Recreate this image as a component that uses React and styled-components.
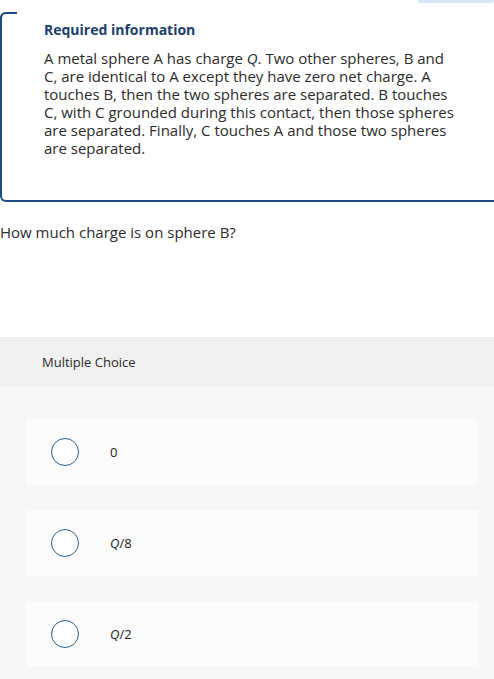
import React from 'react';
import styled, {createGlobalStyle} from 'styled-components';

const Global = createGlobalStyle`
  body {
    margin: 0;
    background: #ffffff;
    font-family: "Open Sans", "Liberation Sans", sans-serif;
    color: #2b2b2b;
  }
`

const TopStrip = styled.div`
  height: 12px;
  display: flex;
  justify-content: flex-end;
`
const TabStub = styled.div`
  width: 76px;
  height: 3px;
  background: #d6e4f3;
  border-radius: 0 0 2px 2px;
`
const InfoBox = styled.div`
  position: relative;
  border-left: 2px solid #1d4b80;
  border-bottom: 2px solid #1d4b80;
  border-radius: 6px 0 0 6px;
  padding: 9px 38px 0 42px;
  height: 190px;
  box-sizing: border-box;
  &::before {
    content: '';
    position: absolute;
    top: 0;
    left: -2px;
    width: 17px;
    height: 6px;
    border-top: 2px solid #1d4b80;
    border-left: 2px solid #1d4b80;
    border-top-left-radius: 6px;
    box-sizing: border-box;
  }
`
const Title = styled.div`
  font-size: 14px;
  line-height: 18px;
  font-weight: 700;
  color: #1c3d6b;
  margin-bottom: 10px;
`
const Body = styled.p`
  margin: 0;
  font-size: 15px;
  line-height: 18px;
  color: #2b2b2b;
`
const Question = styled.p`
  margin: 21px 0 0;
  font-size: 15px;
  line-height: 18px;
  color: #2b2b2b;
  height: 114px;
`
const ChoiceHeader = styled.div`
  height: 50px;
  display: flex;
  align-items: center;
  padding-left: 42px;
  background: #f0f0f0;
  font-size: 13px;
  color: #2b2b2b;
`
const ChoiceArea = styled.div`
  background: #f6f6f6;
  padding: 32px 15px 12px 26px;
  display: flex;
  flex-direction: column;
  gap: 25px;
`
const Option = styled.div`
  height: 66px;
  background: #fbfbfb;
  border-radius: 3px;
  display: flex;
  align-items: center;
  padding-left: 25px;
  gap: 31px;
`
const Radio = styled.span`
  width: 28px;
  height: 28px;
  border: 1.5px solid #2f5e8e;
  border-radius: 50%;
  box-sizing: border-box;
  background: #ffffff;
  flex-shrink: 0;
`
const Label = styled.span`
  font-size: 13px;
  color: #222;
`

const options = [
  <>0</>,
  <><i>Q</i>/8</>,
  <><i>Q</i>/2</>,
]

export default function App() {
  return (
    <>
      <Global/>
      <TopStrip><TabStub/></TopStrip>
      <InfoBox>
        <Title>Required information</Title>
        <Body>
          A metal sphere A has charge <i>Q</i>. Two other spheres, B and C, are identical to A except they have zero net charge. A touches B, then the two spheres are separated. B touches C, with C grounded during this contact, then those spheres are separated. Finally, C touches A and those two spheres are separated.
        </Body>
      </InfoBox>
      <Question>How much charge is on sphere B?</Question>
      <ChoiceHeader>Multiple Choice</ChoiceHeader>
      <ChoiceArea>
        {options.map((o, i) => (
          <Option key={i}>
            <Radio/>
            <Label>{o}</Label>
          </Option>
        ))}
      </ChoiceArea>
    </>
  );
}
